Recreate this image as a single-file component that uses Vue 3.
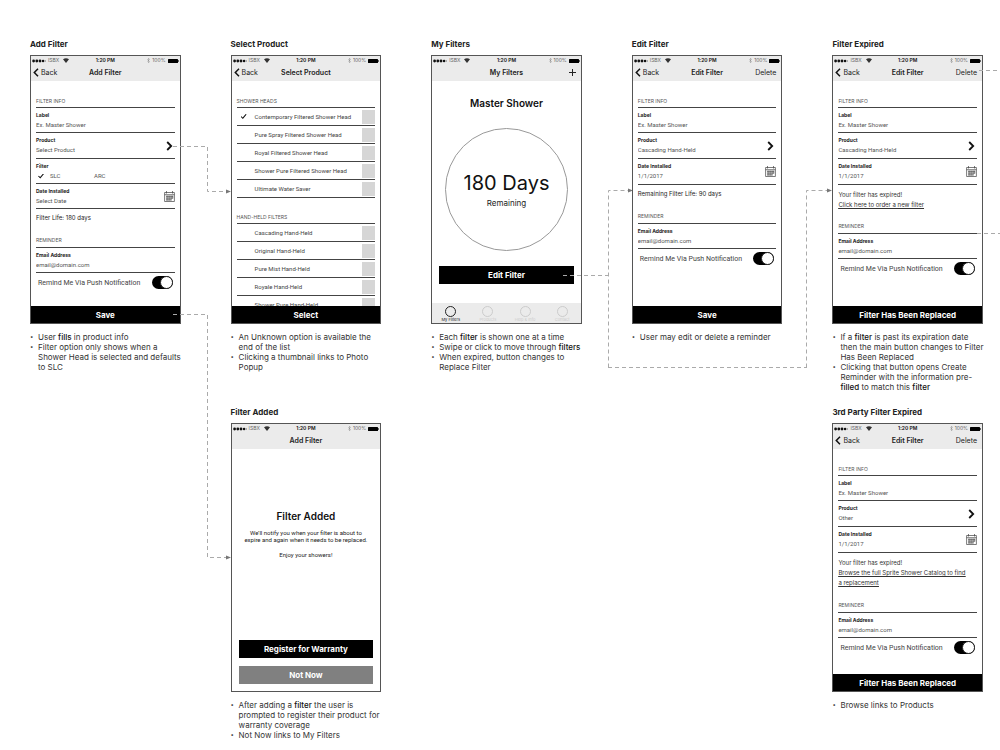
<script setup>
const fields = {
  label: { name: 'Label', value: 'Ex. Master Shower' },
  email: { name: 'Email Address', value: 'email@domain.com' }
}

const product = (value) => ({ name: 'Product', value, icon: 'chevron', tall: true })
const date = (value, tall = true) => ({ name: 'Date Installed', value, icon: 'calendar', tall })

const boards = [
  {
    id: 'add', heading: 'Add Filter', title: 'Add Filter', back: true, kind: 'form',
    fields: [fields.label, product('Select Product'), { name: 'Filter', options: ['SLC', 'ARC'] }, date('Select Date', false)],
    life: 'Filter Life: 180 days', action: 'Save',
    notes: ['User <b>fills</b> in product info', 'Filter option only shows when a\nShower Head is selected and defaults\nto SLC']
  },
  {
    id: 'select', heading: 'Select Product', title: 'Select Product', back: true, kind: 'list', action: 'Select',
    groups: [
      { name: 'Shower Heads', items: ['Contemporary Filtered Shower Head', 'Pure Spray Filtered Shower Head', 'Royal Filtered Shower Head', 'Shower Pure Filtered Shower Head', 'Ultimate Water Saver'] },
      { name: 'Hand-Held Filters', items: ['Cascading Hand-Held', 'Original Hand-Held', 'Pure Mist Hand-Held', 'Royale Hand-Held', 'Shower Pure Hand-Held'] }
    ],
    notes: ['An Unknown option is available the\nend of the list', 'Clicking a thumbnail links to Photo\nPopup']
  },
  {
    id: 'mine', heading: 'My Filters', title: 'My Filters', plus: true, kind: 'home',
    notes: ['Each <b>filter</b> is shown one at a time', 'Swipe or click to move through <b>filters</b>', 'When expired, button changes to\nReplace Filter']
  },
  {
    id: 'edit', heading: 'Edit Filter', title: 'Edit Filter', back: true, del: true, kind: 'form',
    fields: [fields.label, product('Cascading Hand-Held'), date('1/1/2017')],
    life: 'Remaining Filter Life: 90 days', action: 'Save',
    notes: ['User may edit or delete a reminder']
  },
  {
    id: 'expired', heading: 'Filter Expired', title: 'Edit Filter', back: true, del: true, kind: 'form',
    fields: [fields.label, product('Cascading Hand-Held'), date('1/1/2017')],
    expired: ['Click here to order a new filter'], action: 'Filter Has Been Replaced',
    notes: ['If a <b>filter</b> is past its expiration date\nthen the main button changes to Filter\nHas Been Replaced', 'Clicking that button opens Create\nReminder with the information pre-\n<b>filled</b> to match this <b>filter</b>']
  },
  {
    id: 'added', heading: 'Filter Added', title: 'Add Filter', kind: 'added',
    notes: ['After adding a <b>filter</b> the user is\nprompted to register their product for\nwarranty coverage', 'Not Now links to My Filters']
  },
  {
    id: 'third', heading: '3rd Party Filter Expired', title: 'Edit Filter', back: true, del: true, kind: 'form',
    fields: [fields.label, product('Other'), date('1/1/2017')],
    expired: ['Browse the full Sprite Shower Catalog to find', 'a replacement'], action: 'Filter Has Been Replaced',
    notes: ['Browse links to Products']
  }
].map((b) => ({ ...b, notes: b.notes.map((n) => n.split('\n')) }))

const tabs = ['My Filters', 'Products', 'Help & Info', 'Contact']
</script>

<template>
  <main class="canvas">
    <section v-for="b in boards" :key="b.id" class="board" :class="'at-' + b.id">
      <h2>{{ b.heading }}</h2>
      <div class="phone">
        <header>
          <div class="status">
            <span class="carrier">
              <svg width="14" height="4" viewBox="0 0 14 4"><g fill="#111"><circle cx="1.6" cy="2" r="1.4" /><circle cx="4.8" cy="2" r="1.4" /><circle cx="8" cy="2" r="1.4" /><circle cx="11.1" cy="2" r="1.3" /></g><circle cx="13.5" cy="2" r=".7" fill="#888" /></svg>
              <span>ISBX</span>
              <svg class="wifi" width="6" height="5" viewBox="0 0 6 5"><path d="M0 1.3Q3-1 6 1.3L3 5Z" fill="#333" /></svg>
            </span>
            <strong>1:20 PM</strong>
            <span class="power">
              <svg width="3" height="5" viewBox="0 0 3 5"><path d="M.3 1.3 2.5 3.6 1.5 4.8V.2L2.5 1.4.3 3.6" fill="none" stroke="#888" stroke-width=".5" /></svg>
              <span>100%</span>
              <svg width="11" height="4" viewBox="0 0 11 4"><rect width="10" height="4" rx=".6" /><rect x="10.3" y="1.2" width=".7" height="1.6" /></svg>
            </span>
          </div>
          <nav>
            <button v-if="b.back" class="back"><svg width="6" height="9" viewBox="0 0 6 9"><path d="M5 .8 1.3 4.5 5 8.2" fill="none" stroke="#111" stroke-width="1.5" /></svg>Back</button>
            <strong>{{ b.title }}</strong>
            <button v-if="b.del" class="end">Delete</button>
            <button v-if="b.plus" class="end" aria-label="Add"><svg width="7" height="7" viewBox="0 0 7 7"><path d="M3.5 0v7M0 3.5h7" stroke="#222" /></svg></button>
          </nav>
        </header>

        <form v-if="b.kind === 'form'" class="body" @submit.prevent>
          <h3>Filter Info</h3>
          <div v-for="f in b.fields" :key="f.name" class="field" :class="{ tall: f.tall }">
            <template v-if="f.options">
              <span :id="b.id + f.name" class="name">{{ f.name }}</span>
              <div class="options" role="radiogroup" :aria-labelledby="b.id + f.name">
                <label v-for="(o, i) in f.options" :key="o"><input class="tick" type="radio" :name="b.id + '-type'" :checked="i === 0" />{{ o }}</label>
              </div>
            </template>
            <template v-else>
              <label class="name" :for="b.id + f.name">{{ f.name }}</label>
              <input :id="b.id + f.name" class="text" type="text" :value="f.value" />
              <button v-if="f.icon" type="button" class="icon" :aria-label="f.name">
                <svg v-if="f.icon === 'chevron'" width="7" height="10" viewBox="0 0 7 10"><path d="M1.2 1 5.2 5 1.2 9" fill="none" stroke="#111" stroke-width="1.8" /></svg>
                <svg v-else width="11" height="11" viewBox="0 0 11 11" fill="none" stroke="#444" stroke-width=".7"><path d="M.6 1.5h9.8v9H.6zM.6 3.7h9.8M2.5 0v2.5M8.5 0v2.5M2 5.3h7M2 7.1h7M2 8.9h5.2M3.1 4.7v4.9M5.1 4.7v4.9M7.1 4.7v4.9M8.8 4.7v2.8" /></svg>
              </button>
            </template>
          </div>
          <p v-if="b.life" class="life">{{ b.life }}</p>
          <p v-else class="expired">Your filter has expired!<br /><a href="#" :class="{ long: b.expired.length > 1 }"><span v-for="l in b.expired" :key="l">{{ l }}</span></a></p>
          <h3 class="again">Reminder</h3>
          <div class="field">
            <label class="name" :for="b.id + 'mail'">{{ fields.email.name }}</label>
            <input :id="b.id + 'mail'" class="text" type="email" :value="fields.email.value" />
          </div>
          <label class="remind">Remind Me Via Push Notification<input type="checkbox" role="switch" checked /></label>
        </form>

        <div v-else-if="b.kind === 'list'" class="body">
          <div v-for="(g, gi) in b.groups" :key="g.name" class="group">
            <h3>{{ g.name }}</h3>
            <label v-for="(p, i) in g.items" :key="p" class="product"><input class="tick" type="radio" name="product" :checked="gi + i === 0" />{{ p }}<i></i></label>
          </div>
        </div>

        <div v-else-if="b.kind === 'home'" class="home">
          <h1>Master Shower</h1>
          <div class="dial"><span>180 Days</span><small>Remaining</small></div>
          <button class="wide">Edit Filter</button>
          <nav class="tabs">
            <button v-for="(t, i) in tabs" :key="t" :class="{ on: i === 0 }"><i></i>{{ t }}</button>
          </nav>
        </div>

        <div v-else class="added">
          <h1>Filter Added</h1>
          <p>We’ll notify you when your filter is about to<br />expire and again when it needs to be replaced.</p>
          <p>Enjoy your showers!</p>
          <button class="wide">Register for Warranty</button>
          <button class="wide gray">Not Now</button>
        </div>

        <button v-if="b.action" class="action">{{ b.action }}</button>
      </div>
      <ul>
        <li v-for="(n, i) in b.notes" :key="i"><span v-for="l in n" :key="l" v-html="l"></span></li>
      </ul>

      <template v-if="b.id === 'add'">
        <svg class="wire from-product" width="58" height="50" viewBox="0 0 58 50"><path d="M0 .5H34.5V45.5H54" /><path class="tip" d="M53 43.5 58 45.5 53 47.5z" /></svg>
        <svg class="wire from-save" width="58" height="248" viewBox="0 0 58 248"><path d="M0 .5H34.5V243.5H54" /><path class="tip" d="M53 241.5 58 243.5 53 245.5z" /></svg>
      </template>
      <svg v-if="b.id === 'mine'" class="wire from-edit" width="70" height="180" viewBox="0 0 70 180"><path d="M0 85.5H45.5M45.5 177.5V.5H66" transform="translate(0 2)" /><path class="tip" d="M65 .5 70 2.5 65 4.5z" /></svg>
      <svg v-if="b.id === 'edit'" class="wire under" height="1"><line x1="0" y1=".5" x2="100%" y2=".5" /></svg>
      <template v-if="b.id === 'expired'">
        <svg class="wire into" width="26" height="180" viewBox="0 0 26 180"><path d="M.5 179.5V2.5H22" /><path class="tip" d="M21 .5 26 2.5 21 4.5z" /></svg>
        <svg class="wire out-delete" width="22" height="1"><path d="M0 .5H22" /></svg>
        <svg class="wire out-link" width="24" height="1"><path d="M0 .5H24" /></svg>
      </template>
    </section>
  </main>
</template>

<style>
html, body { margin: 0; background: #fff; }
body { overflow: hidden; }
</style>

<style scoped>
* { box-sizing: border-box; }
.canvas {
  display: grid;
  grid-template-columns: repeat(5, minmax(0, 1fr));
  gap: 14px 50px;
  padding: 38px 17px 0 30px;
  font-family: Inter, "Liberation Sans", sans-serif;
  font-size: 6px;
  color: #222;
}
.board { position: relative; white-space: nowrap; }
.at-added { grid-column: 2; grid-row: 2; }
.at-third { grid-column: 5; grid-row: 2; }
h1, h2, h3, p, ul { margin: 0; padding: 0; font-weight: normal; }
h2 { height: 17px; font-size: 8px; line-height: 12px; font-weight: 700; }
button { border: 0; margin: 0; padding: 0; background: none; color: inherit; font: inherit; cursor: pointer; }
svg { display: block; flex: none; }

.phone { display: flex; flex-direction: column; height: 269px; border: 1px solid #555; overflow: hidden; }
header { flex: none; height: 25px; background: #ebebeb; }
.status { display: grid; grid-template-columns: 1fr auto 1fr; align-items: center; height: 9px; padding: 0 1px; font-size: 5px; line-height: 9px; }
.status strong { font-weight: 600; color: #111; }
.carrier, .power { display: flex; align-items: center; gap: 2px; color: #666; }
.carrier .wifi { margin-left: 2px; }
.power { justify-content: flex-end; }
header nav { display: grid; grid-template-columns: 1fr auto 1fr; align-items: center; height: 15px; padding: 0 2px; line-height: 15px; font-size: 7px; }
header nav strong { grid-column: 2; grid-row: 1; font-weight: 600; }
.back { display: flex; align-items: center; gap: 2px; justify-self: start; }
.end { grid-column: 3; justify-self: end; padding-right: 3px; }

.body { flex: 1; min-height: 0; padding: 14px 5px 0; overflow: hidden; }
h3 { height: 13px; border-bottom: 1px solid #444; font-size: 5px; line-height: 12px; text-transform: uppercase; color: #555; }
.field { position: relative; height: 25px; padding-top: 3px; border-bottom: 1px solid #444; }
.field.tall { height: 26px; }
.name { display: block; font-size: 5px; line-height: 9px; font-weight: 700; }
.text { display: block; width: 110px; height: 10px; padding: 0; border: 0; outline: 0; background: none; font: 6px/10px Roboto, sans-serif; color: #555; }
.icon { position: absolute; right: 0; top: 7px; display: grid; place-items: center; width: 11px; height: 11px; }
.options { display: flex; line-height: 10px; color: #555; font-family: Roboto, sans-serif; }
.options label { display: flex; align-items: center; width: 44px; }
.tick { appearance: none; flex: none; width: 6px; height: 5px; margin: 0 6px 0 2px; }
.tick:checked { background: #111; clip-path: polygon(0 55%, 15% 45%, 35% 70%, 85% 0, 100% 12%, 38% 100%); }
.life { height: 19px; line-height: 18px; }
.expired { height: 29px; padding-top: 5px; line-height: 10px; color: #333; }
.expired:has(.long) { height: 40px; }
.expired a { color: inherit; text-underline-offset: 1px; }
.expired a span { display: block; text-decoration: underline; }
.again { height: 20px; line-height: 25px; }
.remind { display: flex; align-items: center; justify-content: space-between; height: 19px; padding: 0 2px; font: 7px/14px Roboto, sans-serif; color: #444; }
.remind input { appearance: none; display: flex; justify-content: flex-end; width: 21px; height: 13px; margin: 0; border-radius: 7px; background: #000; }
.remind input::after { content: ""; box-sizing: border-box; width: 13px; height: 13px; border: 1px solid #222; border-radius: 50%; background: #fff; }

.group + .group { padding-top: 13px; }
.product { display: flex; align-items: center; height: 18px; border-bottom: 1px solid #444; font-family: Roboto, sans-serif; color: #444; }
.product .tick { margin: 0 8px 0 4px; }
.product i { width: 13px; height: 14px; margin-left: auto; background: #d6d6d6; }

.home, .added { display: flex; flex: 1; flex-direction: column; align-items: center; }
h1 { font-size: 10px; line-height: 12px; font-weight: 600; color: #111; }
.home h1 { margin-top: 16px; }
.dial { display: flex; flex-direction: column; align-items: center; width: 123px; height: 123px; margin-top: 19px; padding-top: 42px; border: 1px solid #999; border-radius: 50%; }
.dial span { font-size: 20px; line-height: 24px; color: #111; }
.dial small { font-size: 8px; line-height: 16px; }
.wide, .action { background: #000; color: #fff; font-size: 8px; line-height: 18px; font-weight: 700; }
.wide { align-self: stretch; height: 18px; margin: 15px 7px 0; }
.gray { margin-top: 8px; background: #808080; }
.action { flex: none; height: 18px; margin: 0 -1px -1px; }
.tabs { display: flex; align-self: stretch; margin-top: auto; height: 20px; background: #ebebeb; }
.tabs button { display: flex; flex: 1; flex-direction: column; align-items: center; padding-top: 3px; font-size: 4px; line-height: 6px; color: #ccc; }
.tabs i { flex: none; width: 11px; height: 11px; border: 1px solid currentColor; border-radius: 50%; }
.tabs .on { color: #222; }
.added h1 { margin: 61px 0 7px; }
.added p { margin-bottom: 8px; font: 6px/7px Roboto, sans-serif; text-align: center; }
.added p + .wide { margin-top: auto; }
.added .gray { margin-bottom: 7px; }

ul { padding: 8px 0 0 8px; list-style: none; font-size: 8px; line-height: 10px; color: #333; }
li { position: relative; }
li span { display: block; }
li::before { content: "•"; position: absolute; left: -8px; font-size: 6px; }
li :deep(b) { font-weight: 500; color: #111; }

.wire { position: absolute; fill: none; stroke: #aaa; stroke-dasharray: 4 3; pointer-events: none; }
.tip { fill: #777; stroke: none; }
.from-product { top: 108px; left: calc(100% - 8px); }
.from-save { top: 276px; left: calc(100% - 8px); }
.from-edit { top: 150px; left: calc(100% - 19px); }
.under { top: 329px; left: -24px; width: calc(100% + 49px); }
.into { top: 150px; left: -26px; }
.out-delete { top: 32px; left: calc(100% - 4px); }
.out-link { top: 195px; left: calc(100% - 6px); }
</style>
